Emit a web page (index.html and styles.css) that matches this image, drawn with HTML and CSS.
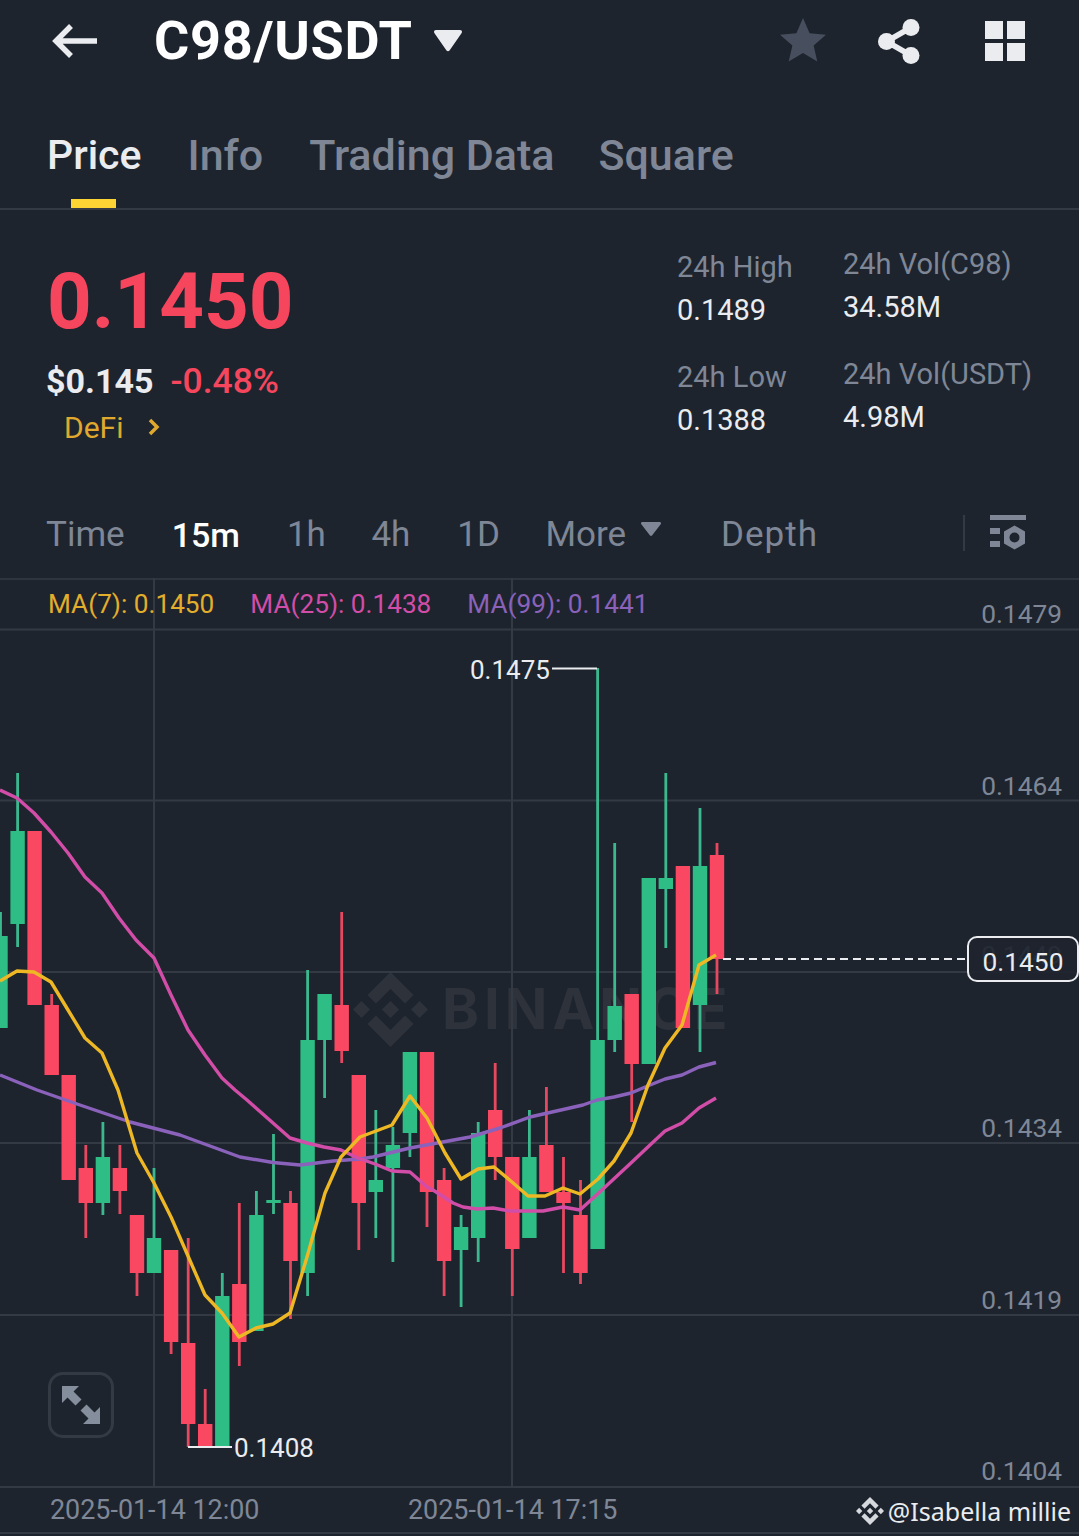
FILE: index.html
```html
<!DOCTYPE html>
<html lang="en">
<head>
<meta charset="utf-8">
<title>C98/USDT</title>
<link rel="stylesheet" href="styles.css">
</head>
<body>
<div class="page">
  <header class="topbar">
    <svg class="icon-back" viewBox="0 0 46 34"><path d="M45 17H6M19 2 4 17l15 15"/></svg>
    <h1 class="pair">C98/USDT</h1>
    <svg class="icon-caret" viewBox="0 0 28 22"><path d="M2 0h24c2 0 2.500 2 1.500 3.200L15.500 20.500c-.8 1.100-2.200 1.100-3 0L.5 3.200C-.5 2 0 0 2 0z"/></svg>
    <div class="topbar-icons">
      <svg class="icon-star" viewBox="0 0 46 45"><path d="M23 0l6.600 15.200 16.400 1.500-12.400 10.800 3.700 16-14.300-8.400-14.300 8.400 3.700-16L0 16.700l16.400-1.500z"/></svg>
      <svg class="icon-share" viewBox="0 0 42 45"><circle cx="33" cy="8.500" r="8.500"/><circle cx="8.500" cy="22.500" r="8.500"/><circle cx="33" cy="36.500" r="8.500"/><path d="M33 8.500 8.500 22.500 33 36.500" fill="none" stroke="#eaecef" stroke-width="5.500"/></svg>
      <svg class="icon-grid" viewBox="0 0 40 40"><path d="M0 0h18v18H0zM22 0h18v18H22zM0 22h18v18H0zM22 22h18v18H22z"/></svg>
    </div>
  </header>

  <nav class="tabs">
    <a class="tab tab-active">Price</a>
    <a class="tab">Info</a>
    <a class="tab">Trading Data</a>
    <a class="tab tab-last">Square</a>
  </nav>

  <section class="stats">
    <div class="stats-main">
      <div class="last-price">0.1450</div>
      <div class="sub-price"><span class="usd">$0.145</span><span class="change">-0.48%</span></div>
      <div class="tag"><span>DeFi</span><svg class="icon-chevron" viewBox="0 0 12 18"><path d="M2 2l7 7-7 7"/></svg></div>
    </div>
    <div class="stats-col">
      <div class="stat"><span class="stat-label">24h High</span><span class="stat-value">0.1489</span></div>
      <div class="stat"><span class="stat-label">24h Low</span><span class="stat-value">0.1388</span></div>
    </div>
    <div class="stats-col stats-col-vol">
      <div class="stat"><span class="stat-label">24h Vol(C98)</span><span class="stat-value">34.58M</span></div>
      <div class="stat"><span class="stat-label">24h Vol(USDT)</span><span class="stat-value">4.98M</span></div>
    </div>
  </section>

  <div class="intervals">
    <span class="interval">Time</span>
    <span class="interval interval-active">15m</span>
    <span class="interval interval-tight">1h</span>
    <span class="interval">4h</span>
    <span class="interval interval-tight">1D</span>
    <span class="interval interval-more">More<svg class="icon-more" viewBox="0 0 20 14"><path d="M1.500 0h17c1.500 0 2 1.500 1 2.500l-8.500 11c-.5.600-1.500.6-2 0L.5 2.500C-.5 1.500 0 0 1.500 0z"/></svg></span>
    <span class="interval interval-depth">Depth</span>
    <span class="intervals-divider"></span>
    <svg class="icon-settings" viewBox="0 0 36 35"><path d="M0 0h36v5H0zM0 13h10v6H0zM0 26h10v6H0z"/><path fill-rule="evenodd" d="M24.500 10.500 35 16.500v12l-10.500 6-10.500-6v-12zM24.500 17.500a5 5 0 1 0 0 10 5 5 0 0 0 0-10z"/></svg>
  </div>

  <div class="chart">
    <div class="watermark">
      <svg class="watermark-logo" viewBox="0 0 126.610 126.610"><path d="M38.730 53.200l24.590-24.580 24.600 24.600 14.300-14.310L63.320 0 24.430 38.900l14.300 14.300zM0 63.310l14.300-14.310 14.310 14.310-14.310 14.300zM38.730 73.410l24.590 24.590 24.600-24.600 14.310 14.290-38.900 38.910-38.910-38.880-.02-.02zM98.010 63.310l14.300-14.310 14.300 14.300-14.300 14.320zM77.830 63.300 63.320 48.780 52.590 59.510l-1.240 1.230-2.540 2.540 14.510 14.500 14.510-14.470z"/></svg>
      <span class="watermark-text">BINANCE</span>
    </div>

    <svg class="plot" viewBox="0 578 1079 908">
      <path class="grid" d="M0 629.500H1079M0 800.500H1079M0 972H1079M0 1143H1079M0 1315H1079M154 578V1486M512 578V1486"/>
      <path class="wick wick-up" d="M.5 912V1028M17.600 773V947M102.900 1122V1215M154 1168V1273M222.300 1273V1447M256.400 1191V1331M273.500 1134V1214M307.600 970V1296M324.600 1040V1098M375.800 1110V1238M392.900 1127V1262M409.900 1052V1157M461.100 1215V1307M478.200 1122V1262M529.400 1110V1238M597.600 668V1249M614.700 843V1052M665.800 773V948M700 808V1052"/>
      <path class="wick wick-down" d="M51.700 994V1075M85.800 1145V1238M119.900 1145V1214M137 1215V1296M171.100 1250V1354M188.200 1238V1447M205.200 1389V1447M239.300 1203V1366M290.500 1191V1319M341.700 912V1063M358.800 1075V1250M427 1052V1227M444.100 1168V1296M495.200 1063V1180M512.300 1157V1296M546.400 1087V1192M563.500 1157V1273M580.500 1180V1284M631.700 994V1122M717 843V994"/>
      <path class="body body-up" d="M.5 936V1028M17.600 831V924M102.900 1157V1203M154 1238V1273M222.300 1296V1447M256.400 1215V1331M273.500 1200V1203M307.600 1040V1273M324.600 994V1040M375.800 1180V1192M392.900 1145V1168M409.900 1052V1133M461.100 1227V1250M478.200 1133V1238M529.400 1157V1238M597.600 1040V1249M614.700 1006V1040M648.800 878V1064M665.800 878V889M700 866V1005"/>
      <path class="body body-down" d="M34.600 831V1005M51.700 1005V1075M68.700 1075V1180M85.800 1168V1203M119.900 1168V1191M137 1215V1273M171.100 1250V1342M188.200 1343V1424M205.200 1424V1447M239.300 1284V1342M290.500 1203V1261M341.700 1005V1051M358.800 1075V1203M427 1052V1192M444.100 1180V1261M495.200 1110V1157M512.300 1157V1249M546.400 1145V1192M563.500 1192V1203M580.500 1215V1273M631.700 994V1064M682.900 866V1028M717 855V959"/>
      <path class="ma ma-99" d="M0 1075L37 1090L77 1104L130 1122L180 1135L240 1157L273 1162.500L300 1165L333 1161L360 1159L373 1157L410 1148L470 1137L500 1128L530 1117L583 1105L597 1100L614 1097L631 1093L650 1085L665 1079L682 1075L699 1067L716 1062.500"/>
      <path class="ma ma-25" d="M0 790L17 798L34 813L51 832L68 853L85 877L102 893L119 918L136 940L154 958L171 995L188 1030L205 1055L222 1078L235 1090L247 1100L290 1138L307 1143L324 1147L341 1150L358 1158L375 1164L392 1171L410 1172L427 1187L433 1190L453 1203L463 1207L477 1209L493 1208L510 1211L530 1211L543 1211L563 1207L580 1210L603 1189L632 1162L650 1145L665 1131L682 1123L699 1108L716 1098"/>
      <path class="ma ma-7" d="M0 981L17 971L34 972L51 982L68 1010L85 1038L102 1053L118 1090L137 1153L154 1183L171 1217L188 1256L205 1295L222 1313L239 1337L256 1328L273 1324L290 1313L307 1257L325 1193L341 1157L360 1137L392 1125L410 1096L427 1118L445 1153L461 1179L478 1169L494 1167L512 1182L528 1196L545 1196L563 1188L580 1194L598 1179L614 1161L631 1133L648 1085L665 1048L682 1025L699 965L716 955"/>
      <path class="marker" d="M552 668.500H597M188 1447H232"/>
      <path class="last-line" d="M723 959H967"/>
    </svg>

    <span class="axis-label axis-label-1">0.1479</span>
    <span class="axis-label axis-label-2">0.1464</span>
    <span class="axis-label axis-label-3">0.1449</span>
    <span class="axis-label axis-label-4">0.1434</span>
    <span class="axis-label axis-label-5">0.1419</span>
    <span class="axis-label axis-label-6">0.1404</span>
    <span class="last-tag">0.1450</span>

    <span class="extreme extreme-high">0.1475</span>
    <span class="extreme extreme-low">0.1408</span>

    <div class="ma-legend">
      <span class="ma-7-text">MA(7): 0.1450</span>
      <span class="ma-25-text">MA(25): 0.1438</span>
      <span class="ma-99-text">MA(99): 0.1441</span>
    </div>

    <button class="expand">
      <svg class="icon-expand" viewBox="0 0 38 38"><path d="M0 0h17l-5.500 5.500 8 8-6 6-8-8L0 17zM38 38H21l5.500-5.500-8-8 6-6 8 8L38 21z"/></svg>
    </button>
  </div>

  <footer class="time-axis">
    <span class="time time-a">2025-01-14 12:00</span>
    <span class="time time-b">2025-01-14 17:15</span>
    <span class="credit">
      <svg class="credit-logo" viewBox="0 0 126.610 126.610"><path d="M38.730 53.200l24.590-24.580 24.600 24.600 14.300-14.310L63.320 0 24.430 38.900l14.300 14.300zM0 63.310l14.300-14.310 14.310 14.310-14.310 14.300zM38.730 73.410l24.590 24.590 24.600-24.600 14.310 14.290-38.900 38.910-38.910-38.880-.02-.02zM98.010 63.310l14.300-14.310 14.300 14.300-14.300 14.320zM77.830 63.300 63.320 48.780 52.590 59.510l-1.240 1.230-2.540 2.540 14.510 14.500 14.510-14.470z"/></svg>
      <span>@Isabella millie</span>
    </span>
  </footer>
</div>
</body>
</html>
```
FILE: styles.css
```css
* { box-sizing: border-box; }
html, body { margin: 0; padding: 0; background: #1e242e; }
body { font-family: Roboto, "Liberation Sans", sans-serif; color: #eaecef; }
.page { width: 1079px; height: 1536px; overflow: hidden; background: #1e242e; display: flex; flex-direction: column; }

/* top bar */
.topbar { height: 82px; display: flex; align-items: center; padding-left: 52px; flex: none; }
.icon-back { width: 46px; height: 34px; fill: none; stroke: #eaecef; stroke-width: 5.500; margin-right: 56px; }
.pair { margin: 0; font-size: 54px; font-weight: 700; letter-spacing: .7px; color: #fff; line-height: 1; margin-right: 21px; }
.icon-caret { width: 28px; height: 22px; fill: #eaecef; margin-top: -1px; }
.topbar-icons { margin-left: auto; display: flex; align-items: center; gap: 52px; padding-right: 54px; }
.icon-star { width: 46px; height: 45px; fill: #474f5e; margin-top: -1px; }
.icon-share { width: 42px; height: 45px; fill: #eaecef; margin-right: 13px; }
.icon-grid { width: 40px; height: 40px; fill: #eaecef; }

/* tabs */
.tabs { height: 128px; flex: none; display: flex; gap: 46px; padding: 48px 0 0 47px; border-bottom: 2px solid #343a44; }
.tab { font-size: 43px; font-weight: 500; color: #7f8796; line-height: 50px; height: 78px; position: relative; }
.tab-active { color: #eaecef; font-size: 41px; }
.tab-last { margin-left: -2px; }
.tab-active::after { content: ""; position: absolute; left: 24px; width: 45px; height: 9px; bottom: 0; background: #fcd535; }

/* stats */
.stats { height: 300px; flex: none; display: flex; padding: 0 0 0 47px; }
.stats-main { width: 631px; padding-top: 54px; }
.last-price { font-size: 78px; font-weight: 700; color: #f6465d; line-height: 76px; }
.sub-price { display: flex; gap: 17px; line-height: 40px; margin-top: 21px; margin-left: -1px; }
.usd { color: #eaecef; font-weight: 700; font-size: 34px; }
.change { color: #f6465d; font-weight: 500; font-size: 35.500px; }
.tag { display: flex; align-items: center; gap: 25px; margin: 9px 0 0 17px; color: #e0a92d; font-size: 30px; line-height: 36px; }
.icon-chevron { width: 12px; height: 18px; fill: none; stroke: #e0a92d; stroke-width: 3.500; margin-top: -2px; }
.stats-col { width: 166px; flex: none; padding-top: 39px; display: flex; flex-direction: column; gap: 30px; margin-left: -1px; margin-right: 1px; }
.stats-col-vol { padding-top: 36px; }
.stat { display: flex; flex-direction: column; gap: 6px; }
.stat-label { font-size: 29px; line-height: 37px; color: #7f8796; white-space: nowrap; }
.stat-value { font-size: 29px; line-height: 37px; color: #eaecef; }

/* interval bar */
.intervals { height: 68px; flex: none; display: flex; align-items: center; padding: 0 0 18px 46px; }
.interval { font-size: 35px; line-height: 50px; color: #7f8796; margin-right: 47px; }
.interval-active { color: #fff; font-weight: 500; font-size: 34px; }
.interval-tight { margin-right: 45.500px; }
.interval-more { display: flex; align-items: flex-start; gap: 15px; margin-right: 60px; }
.interval-depth { letter-spacing: 1px; }
.icon-more { width: 20px; height: 14px; fill: #7f8796; margin-top: 12px; }
.intervals-divider { margin-left: auto; width: 2px; height: 36px; background: #343a44; margin-top: -5px; }
.icon-settings { width: 36px; height: 35px; fill: #7f8796; margin: -5px 53px 0 25px; }

/* chart */
.chart { position: relative; height: 908px; flex: none; border-top: 2px solid #2f353f; }
.plot { position: absolute; left: 0; top: -2px; width: 1079px; height: 908px; overflow: visible; }
.grid { stroke: #343a44; stroke-width: 2; fill: none; }
.wick, .body, .ma, .marker, .last-line { fill: none; }
.wick { stroke-width: 2.800; }
.body { stroke-width: 14.400; }
.wick-up { stroke: #3bb88d; }
.body-up { stroke: #2ebd85; }
.wick-down { stroke: #e5485f; }
.body-down { stroke: #fa4862; }
.ma { stroke-width: 3.400; stroke-linejoin: round; }
.ma-7 { stroke: #eeb825; }
.ma-25 { stroke: #d24da8; }
.ma-99 { stroke: #8a62bb; }
.marker { stroke: #eaecef; stroke-width: 2; }
.last-line { stroke: #eaecef; stroke-width: 2; stroke-dasharray: 8 5; }

.watermark { position: absolute; left: 353px; top: 392px; display: flex; align-items: center; gap: 14px; }
.watermark-logo { width: 75px; height: 75px; fill: #2d323b; }
.watermark-text { font-family: Inter, "Liberation Sans", sans-serif; font-weight: 700; font-size: 56px; letter-spacing: 5px; color: #2d323b; line-height: 75px; }

.axis-label { position: absolute; right: 17px; font-size: 26.300px; line-height: 30px; color: #7f8796; }
.axis-label-1 { top: 19px; }
.axis-label-2 { top: 191px; }
.axis-label-3 { top: 360px; }
.axis-label-4 { top: 533px; }
.axis-label-5 { top: 705px; }
.axis-label-6 { top: 876px; }
.last-tag { position: absolute; left: 967px; top: 356px; width: 112px; height: 46px; border: 2px solid #eaecef; border-radius: 10px; background: rgba(30, 36, 46, .9); font-size: 26.300px; line-height: 48px; text-align: center; color: #eaecef; }

.extreme { position: absolute; font-size: 26px; line-height: 30px; color: #eaecef; }
.extreme-high { left: 470px; top: 75px; }
.extreme-low { left: 234px; top: 853px; }

.ma-legend { position: absolute; left: 48px; top: 8px; display: flex; gap: 36px; font-size: 26.200px; line-height: 32px; }
.ma-7-text { color: #e3ae2b; }
.ma-25-text { color: #d24da8; }
.ma-99-text { color: #8a62bb; }

.expand { position: absolute; left: 48px; top: 792px; width: 66px; height: 66px; border: 3px solid #343a44; border-radius: 15px; background: none; padding: 0; display: flex; align-items: center; justify-content: center; }
.icon-expand { width: 38px; height: 38px; fill: #848e9c; }

/* time axis */
.time-axis { height: 48px; flex: none; position: relative; border-top: 2px solid #343a44; border-bottom: 2px solid #343a44; }
.time { position: absolute; top: 7px; font-size: 26.900px; line-height: 30px; color: #7f8796; }
.time-a { left: 50px; }
.time-b { left: 408px; }
.credit { position: absolute; right: 8px; top: 4px; display: flex; align-items: center; gap: 4px; font-family: "Noto Sans", sans-serif; font-size: 25px; line-height: 38px; color: #eaecef; }
.credit-logo { width: 28px; height: 28px; fill: #d5d8dc; }
```
